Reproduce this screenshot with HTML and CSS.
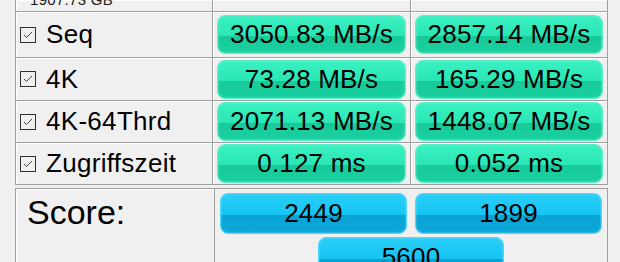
FILE: index.html
```html
<!DOCTYPE html>
<html lang="de">
<head>
    <meta charset="UTF-8">
    <meta name="viewport" content="width=device-width, initial-scale=1.0">
    <title>AS SSD Benchmark</title>
    <link rel="stylesheet" href="styles.css">
</head>
<body>

    <div class="results">
        <div class="cell label top"><span class="size">1907.73 GB</span></div>
        <div class="cell top"></div>
        <div class="cell top"></div>

        <div class="cell label first">
            <span class="check"><svg width="14" height="14" viewBox="0 0 14 14"><path d="M3 7 L5.5 9.5 L11 4" fill="none" stroke="#404040" stroke-width="1"/></svg></span>
            <span>Seq</span>
        </div>
        <div class="cell first"><div class="bar green">3050.83 MB/s</div></div>
        <div class="cell first"><div class="bar green">2857.14 MB/s</div></div>

        <div class="cell label">
            <span class="check"><svg width="14" height="14" viewBox="0 0 14 14"><path d="M3 7 L5.5 9.5 L11 4" fill="none" stroke="#404040" stroke-width="1"/></svg></span>
            <span>4K</span>
        </div>
        <div class="cell"><div class="bar green">73.28 MB/s</div></div>
        <div class="cell"><div class="bar green">165.29 MB/s</div></div>

        <div class="cell label">
            <span class="check"><svg width="14" height="14" viewBox="0 0 14 14"><path d="M3 7 L5.5 9.5 L11 4" fill="none" stroke="#404040" stroke-width="1"/></svg></span>
            <span>4K-64Thrd</span>
        </div>
        <div class="cell"><div class="bar green">2071.13 MB/s</div></div>
        <div class="cell"><div class="bar green">1448.07 MB/s</div></div>

        <div class="cell label">
            <span class="check"><svg width="14" height="14" viewBox="0 0 14 14"><path d="M3 7 L5.5 9.5 L11 4" fill="none" stroke="#404040" stroke-width="1"/></svg></span>
            <span>Zugriffszeit</span>
        </div>
        <div class="cell"><div class="bar green">0.127 ms</div></div>
        <div class="cell"><div class="bar green">0.052 ms</div></div>
    </div>

    <div class="score">
        <div class="score-title">Score:</div>
        <div class="score-values">
            <div class="bar blue">2449</div>
            <div class="bar blue">1899</div>
            <div class="bar blue total">5600</div>
        </div>
    </div>

</body>
</html>
```

FILE: styles.css
```css
body {
    font-family: "Liberation Sans", Arial, sans-serif;
    background-color: #f0f0f0;
    color: #000;
    margin: 0;
    padding: 0 0 0 15px;
    overflow: hidden;
}
.results {
    display: grid;
    grid-template-columns: 197px 198px 197px;
    grid-template-rows: 12px 46px 43px 42px 42px;
    width: 593px;
    border-left: 1px solid #a0a0a0;
    box-sizing: border-box;
}
.cell {
    border-right: 1px solid #a0a0a0;
    border-bottom: 1px solid #a0a0a0;
    box-shadow: inset 1px 1px 0 #ffffff;
    display: flex;
    align-items: center;
    padding: 0 4px;
    overflow: hidden;
}
.cell.top {
    align-items: flex-start;
}
.size {
    font-size: 15px;
    line-height: 15px;
    margin: -8px 0 0 10px;
    color: #1a1a1a;
}
.label {
    font-size: 26px;
    letter-spacing: 0.3px;
    padding-left: 4px;
}
.check {
    width: 14px;
    height: 14px;
    border: 1px solid #303030;
    margin-right: 10px;
    display: flex;
    flex-shrink: 0;
}
.bar {
    flex: 1;
    height: 39px;
    border-radius: 8px;
    display: flex;
    align-items: center;
    justify-content: center;
    font-size: 26px;
    letter-spacing: 0.2px;
    box-sizing: border-box;
}
.green {
    border: 1px solid #5cefc6;
    background: linear-gradient(#3af0c2, #2ae6b4 54%, #18ca9a 55%, #1ad0a0);
    box-shadow: inset 0 0 2px #7ff6d6;
}
.score {
    margin-top: 3px;
    width: 593px;
    height: 80px;
    border-left: 1px solid #a0a0a0;
    border-top: 1px solid #a0a0a0;
    border-right: 1px solid #a0a0a0;
    box-sizing: border-box;
    display: grid;
    grid-template-columns: 199px 1fr;
}
.score-title {
    border-right: 1px solid #a0a0a0;
    box-shadow: inset 1px 1px 0 #ffffff;
    font-size: 34px;
    line-height: 40px;
    padding: 3px 0 0 11px;
}
.score-values {
    display: grid;
    grid-template-columns: 187px 187px;
    column-gap: 8px;
    row-gap: 3px;
    padding: 4px 0 0 5px;
    align-content: start;
}
.blue {
    height: 41px;
    border: 1px solid #4fd5fa;
    background: linear-gradient(#28cef8, #16c4f2 54%, #0aa2d4 55%, #0ca8da);
    box-shadow: inset 0 0 2px #7fe2fc;
}
.total {
    grid-column: 1 / 3;
    justify-self: center;
    width: 186px;
}
```
